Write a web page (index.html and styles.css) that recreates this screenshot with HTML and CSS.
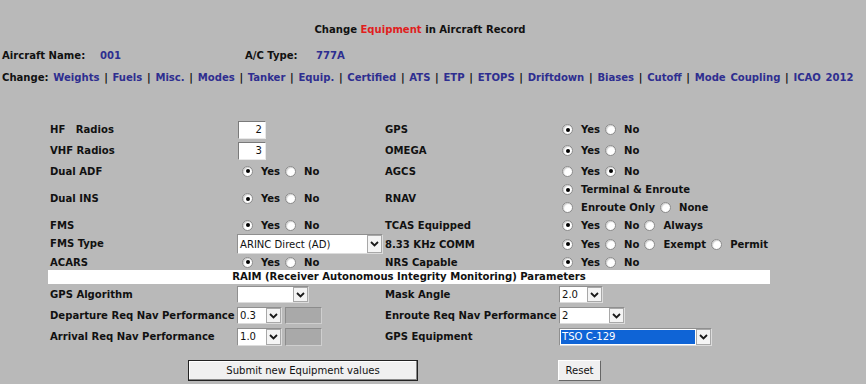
FILE: index.html
```html
<!DOCTYPE html>
<html>
<head>
<meta charset="utf-8">
<title>Change Equipment</title>
<link rel="stylesheet" href="styles.css">
</head>
<body>
<div class="title">Change <span class="red">Equipment</span> in Aircraft Record</div>
<div class="acline"><span class="k1">Aircraft Name:</span><span class="v1">001</span><span class="k2">A/C Type:</span><span class="v2">777A</span></div>
<div class="nav">Change: <a>Weights</a> | <a>Fuels</a> | <a>Misc.</a> | <a>Modes</a> | <a>Tanker</a> | <a>Equip.</a> | <a>Certified</a> | <a>ATS</a> | <a>ETP</a> | <a>ETOPS</a> | <a>Driftdown</a> | <a>Biases</a> | <a>Cutoff</a> | <a>Mode Coupling</a> | <a>ICAO 2012</a></div>

<div class="form">
  <div class="lab h21">HF &nbsp; Radios</div>
  <div class="val"><span class="txt">2</span></div>
  <div class="lab">GPS</div>
  <div class="val r"><span class="opt"><i class="rb on"></i>Yes</span><span class="opt"><i class="rb"></i>No</span></div>

  <div class="lab h21">VHF Radios</div>
  <div class="val"><span class="txt">3</span></div>
  <div class="lab">OMEGA</div>
  <div class="val r"><span class="opt"><i class="rb on"></i>Yes</span><span class="opt"><i class="rb"></i>No</span></div>

  <div class="lab h20">Dual ADF</div>
  <div class="val l"><span class="opt"><i class="rb on"></i>Yes</span><span class="opt"><i class="rb"></i>No</span></div>
  <div class="lab">AGCS</div>
  <div class="val r"><span class="opt"><i class="rb"></i>Yes</span><span class="opt"><i class="rb on"></i>No</span></div>

  <div class="lab h35">Dual INS</div>
  <div class="val l"><span class="opt"><i class="rb on"></i>Yes</span><span class="opt"><i class="rb"></i>No</span></div>
  <div class="lab">RNAV</div>
  <div class="val r stack">
    <div class="line"><span class="opt"><i class="rb on"></i>Terminal &amp; Enroute</span></div>
    <div class="line"><span class="opt"><i class="rb"></i>Enroute Only</span><span class="opt"><i class="rb"></i>None</span></div>
  </div>

  <div class="lab h18">FMS</div>
  <div class="val l"><span class="opt"><i class="rb on"></i>Yes</span><span class="opt"><i class="rb"></i>No</span></div>
  <div class="lab">TCAS Equipped</div>
  <div class="val r"><span class="opt"><i class="rb on"></i>Yes</span><span class="opt"><i class="rb"></i>No</span><span class="opt"><i class="rb"></i>Always</span></div>

  <div class="lab h19">FMS Type</div>
  <div class="val"><span class="sel w146 h20"><span class="st">ARINC Direct (AD)</span><span class="ar"><svg width="9" height="6" viewBox="0 0 9 6"><path d="M1 1 L4.5 4.5 L8 1" fill="none" stroke="#1a1a1a" stroke-width="1.8"/></svg></span></span></div>
  <div class="lab">8.33 KHz COMM</div>
  <div class="val r"><span class="opt"><i class="rb on"></i>Yes</span><span class="opt"><i class="rb"></i>No</span><span class="opt"><i class="rb"></i>Exempt</span><span class="opt"><i class="rb"></i>Permit</span></div>

  <div class="lab h16">ACARS</div>
  <div class="val l"><span class="opt"><i class="rb on"></i>Yes</span><span class="opt"><i class="rb"></i>No</span></div>
  <div class="lab">NRS Capable</div>
  <div class="val r"><span class="opt"><i class="rb on"></i>Yes</span><span class="opt"><i class="rb"></i>No</span></div>

  <div class="bar">RAIM (Receiver Autonomous Integrity Monitoring) Parameters</div>

  <div class="lab h21">GPS Algorithm</div>
  <div class="val"><span class="sel w72"><span class="st"></span><span class="ar"><svg width="9" height="6" viewBox="0 0 9 6"><path d="M1 1 L4.5 4.5 L8 1" fill="none" stroke="#1a1a1a" stroke-width="1.8"/></svg></span></span></div>
  <div class="lab">Mask Angle</div>
  <div class="val rs"><span class="sel w44"><span class="st">2.0</span><span class="ar"><svg width="9" height="6" viewBox="0 0 9 6"><path d="M1 1 L4.5 4.5 L8 1" fill="none" stroke="#1a1a1a" stroke-width="1.8"/></svg></span></span></div>

  <div class="lab h21">Departure Req Nav Performance</div>
  <div class="val"><span class="sel w45"><span class="st">0.3</span><span class="ar"><svg width="9" height="6" viewBox="0 0 9 6"><path d="M1 1 L4.5 4.5 L8 1" fill="none" stroke="#1a1a1a" stroke-width="1.8"/></svg></span></span><span class="dis"></span></div>
  <div class="lab">Enroute Req Nav Performance</div>
  <div class="val rs"><span class="sel w66"><span class="st">2</span><span class="ar"><svg width="9" height="6" viewBox="0 0 9 6"><path d="M1 1 L4.5 4.5 L8 1" fill="none" stroke="#1a1a1a" stroke-width="1.8"/></svg></span></span></div>

  <div class="lab h21">Arrival Req Nav Performance</div>
  <div class="val"><span class="sel w45 h18"><span class="st">1.0</span><span class="ar"><svg width="9" height="6" viewBox="0 0 9 6"><path d="M1 1 L4.5 4.5 L8 1" fill="none" stroke="#1a1a1a" stroke-width="1.8"/></svg></span></span><span class="dis h18"></span></div>
  <div class="lab">GPS Equipment</div>
  <div class="val rs"><span class="sel w153 h18"><span class="st hl">TSO C-129</span><span class="ar"><svg width="9" height="6" viewBox="0 0 9 6"><path d="M1 1 L4.5 4.5 L8 1" fill="none" stroke="#1a1a1a" stroke-width="1.8"/></svg></span></span></div>
</div>

<div class="actions"><span class="btn submit">Submit new Equipment values</span><span class="btn reset">Reset</span></div>
</body>
</html>
```
FILE: styles.css
```css
html, body {
  margin: 0;
  padding: 0;
  background: #b9b9b9;
}
body {
  width: 866px;
  height: 384px;
  overflow: hidden;
  font-family: "DejaVu Sans Condensed", "DejaVu Sans", sans-serif;
  font-size: 11.2px;
  font-weight: bold;
  color: #111;
}
.title {
  width: 840px;
  text-align: center;
  padding-top: 22px;
  line-height: 16px;
  height: 16px;
}
.red { color: #e01e1e; }
.acline {
  margin-top: 10px;
  line-height: 16px;
  height: 16px;
  padding-left: 2px;
  display: flex;
}
.k1 { width: 98px; }
.v1 { width: 145px; color: #2e2e90; }
.k2 { width: 71px; }
.v2 { color: #2e2e90; }
.nav {
  margin-top: 6px;
  line-height: 16px;
  height: 16px;
  padding-left: 2px;
  white-space: nowrap;
  word-spacing: 1.2px;
}
.nav a { color: #2e2e90; }

.form {
  margin-top: 33px;
  margin-left: 48px;
  width: 722px;
  display: grid;
  grid-template-columns: 189px 146px 175px 212px;
}
.lab {
  padding-left: 2px;
  display: flex;
  align-items: center;
  white-space: nowrap;
}
.h21 { height: 21px; }
.h20 { height: 20px; }
.h35 { height: 35px; }
.h18 { height: 18px; }
.h19 { height: 19px; }
.h16 { height: 16px; }
.val {
  display: flex;
  align-items: center;
  white-space: nowrap;
}
.val.l { padding-left: 5px; }
.val.r { padding-left: 4px; }
.val.rs { padding-left: 1px; }
.stack {
  height: 35px;
  flex-direction: column;
  align-items: flex-start;
  justify-content: center;
}
.line {
  height: 18px;
  flex-shrink: 0;
  display: flex;
  align-items: center;
}
.opt {
  display: inline-flex;
  align-items: center;
  margin-right: 5px;
}
.rb {
  width: 9px;
  height: 9px;
  border-radius: 50%;
  border: 1px solid #8a8a8a;
  background: #fff;
  margin-right: 8px;
  position: relative;
  box-shadow: inset 1px 1px 1px #d0d0d0;
}
.rb.on::after {
  content: "";
  position: absolute;
  left: 2.5px;
  top: 2.5px;
  width: 4px;
  height: 4px;
  border-radius: 50%;
  background: #000;
}
.txt {
  margin-left: 1px;
  width: 23px;
  height: 16px;
  padding-right: 3px;
  background: #fff;
  border-top: 1px solid #7a7a7a;
  border-left: 1px solid #7a7a7a;
  border-right: 1px solid #e8e8e8;
  border-bottom: 1px solid #e8e8e8;
  font-weight: normal;
  text-align: right;
  line-height: 16px;
}
.sel {
  display: inline-flex;
  height: 17px;
  background: #fff;
  border: 1px solid #8f8f8f;
  border-right-color: #dcdcdc;
  border-bottom-color: #dcdcdc;
  box-sizing: border-box;
  font-weight: normal;
}
.sel.h20 { height: 20px; }
.sel.h18 { height: 18px; }
.w146 { width: 146px; }
.w72 { width: 72px; }
.w44 { width: 44px; }
.w45 { width: 45px; }
.w66 { width: 66px; }
.w153 { width: 153px; }
.st {
  flex: 1;
  padding-left: 2px;
  display: flex;
  align-items: center;
  overflow: hidden;
}
.st.hl {
  background: #0f64d6;
  color: #fff;
  margin: 1px;
  padding-left: 1px;
}
.ar {
  width: 15px;
  background: #f4f4f4;
  border: 1px solid #a8a8a8;
  box-sizing: border-box;
  display: flex;
  align-items: center;
  justify-content: center;
}
.dis {
  width: 37px;
  height: 17px;
  margin-left: 3px;
  background: #a9a9a9;
  border: 1px solid #cfcfcf;
  border-top-color: #8c8c8c;
  border-left-color: #8c8c8c;
  box-sizing: border-box;
}
.dis.h18 { height: 18px; }
.bar {
  grid-column: 1 / 5;
  height: 14px;
  background: #fff;
  text-align: center;
  line-height: 14px;
}
.actions {
  margin-top: 13px;
  padding-left: 188px;
  display: flex;
}
.btn {
  height: 21px;
  box-sizing: border-box;
  background: #f0f0f0;
  font-weight: normal;
  display: flex;
  align-items: center;
  justify-content: center;
}
.submit {
  width: 230px;
  border: 1px solid #222;
  box-shadow: inset -1px -1px 0 #888, inset 1px 1px 0 #fff;
}
.reset {
  width: 43px;
  margin-left: 140px;
  border: 1px solid #fff;
  border-right-color: #666;
  border-bottom-color: #666;
}
```
